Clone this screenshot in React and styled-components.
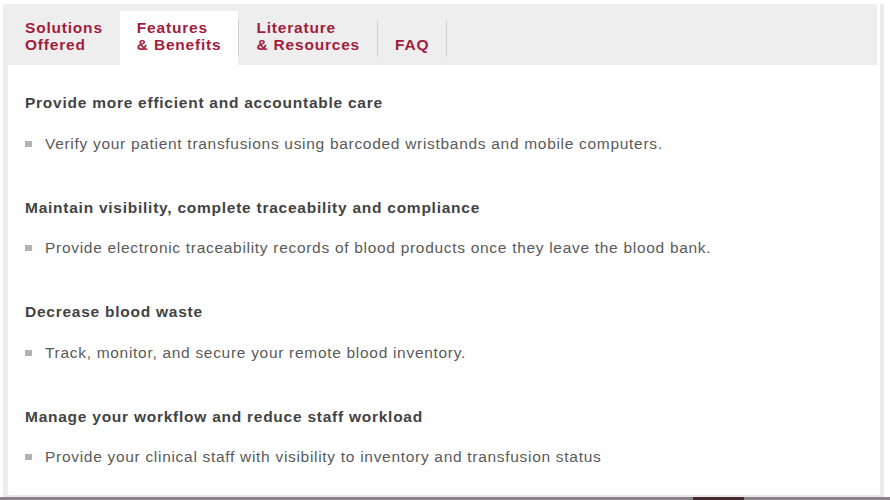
import React from 'react';
import styled, { createGlobalStyle } from 'styled-components';

const GlobalStyle = createGlobalStyle`
  html, body {
    margin: 0;
    padding: 0;
    background: #fff;
  }
  body {
    font-family: "Liberation Sans", Arial, sans-serif;
  }
`;

const tabs = [
  { label: ['Solutions', 'Offered'] },
  { label: ['Features', '& Benefits'], active: true },
  { label: ['Literature', '& Resources'], divider: true },
  { label: ['FAQ'], divider: true }
];

const sections = [
  {
    title: 'Provide more efficient and accountable care',
    items: ['Verify your patient transfusions using barcoded wristbands and mobile computers.']
  },
  {
    title: 'Maintain visibility, complete traceability and compliance',
    items: ['Provide electronic traceability records of blood products once they leave the blood bank.']
  },
  {
    title: 'Decrease blood waste',
    items: ['Track, monitor, and secure your remote blood inventory.']
  },
  {
    title: 'Manage your workflow and reduce staff workload',
    items: ['Provide your clinical staff with visibility to inventory and transfusion status']
  }
];

const Page = styled.div`
  display: flex;
  flex-direction: column;
  height: 500px;
  box-sizing: border-box;
  padding-top: 4px;
`;

const Frame = styled.div`
  flex: 1;
  display: flex;
  padding-left: 3px;
  gap: 3px;
`;

const Panel = styled.div`
  width: 874px;
  display: flex;
  flex-direction: column;
  background: #eeeeee;
  padding-left: 5px;
  box-sizing: border-box;
`;

const RightRule = styled.div`
  width: 4px;
  background: #ebebeb;
`;

const TabBar = styled.div`
  height: 61px;
  display: flex;
  align-items: flex-end;
`;

const Tab = styled.div`
  height: 54px;
  box-sizing: border-box;
  display: flex;
  align-items: flex-end;
  padding: 0 17px 12px;
  background: ${p => (p.$active ? '#fff' : 'transparent')};
  color: #a21d3b;
  font-size: 15.5px;
  letter-spacing: 0.8px;
  font-weight: bold;
  line-height: 17px;
  cursor: pointer;
`;

const Divider = styled.span`
  align-self: flex-start;
  margin-top: 16px;
  width: 1px;
  height: 37px;
  background: #d2d2d2;
`;

const Content = styled.div`
  flex: 1;
  background: #fff;
  padding: 28px 17px 0;
  display: flex;
  flex-direction: column;
  gap: 44px;
`;

const Section = styled.div`
  display: flex;
  flex-direction: column;
  gap: 20.5px;
`;

const Title = styled.h3`
  margin: 0;
  font-size: 15.5px;
  letter-spacing: 0.75px;
  line-height: 20px;
  font-weight: bold;
  color: #434343;
`;

const List = styled.ul`
  margin: 0;
  padding: 0;
  list-style: none;
`;

const Item = styled.li`
  display: flex;
  align-items: center;
  gap: 13px;
  font-size: 15.5px;
  letter-spacing: 0.7px;
  line-height: 20px;
  color: #5a5a5a;

  &::before {
    content: '';
    width: 7px;
    height: 6px;
    background: #b3b3b3;
    flex: none;
  }
`;

const BottomEdge = styled.div`
  height: 2px;
  margin-left: 3px;
  width: 881px;
  background: #ece4e7;
`;

const BottomStrip = styled.div`
  height: 3px;
  background: linear-gradient(to right, #8a8387 0, #8a8387 693px, #4a2a32 693px, #4a2a32 744px, #8a8387 744px);
`;

const App = () => {
  return (
    <Page>
      <GlobalStyle/>
      <Frame>
        <Panel>
          <TabBar>
            {tabs.map((t, i) => (
              <React.Fragment key={i}>
                {t.divider && <Divider/>}
                <Tab $active={t.active}>
                  <div>
                    {t.label.map((l, j) => <div key={j}>{l}</div>)}
                  </div>
                </Tab>
              </React.Fragment>
            ))}
            <Divider/>
          </TabBar>
          <Content>
            {sections.map((s, i) => (
              <Section key={i}>
                <Title>{s.title}</Title>
                <List>
                  {s.items.map((it, j) => <Item key={j}>{it}</Item>)}
                </List>
              </Section>
            ))}
          </Content>
        </Panel>
        <RightRule/>
      </Frame>
      <BottomEdge/>
      <BottomStrip/>
    </Page>
  );
};

export default App;
